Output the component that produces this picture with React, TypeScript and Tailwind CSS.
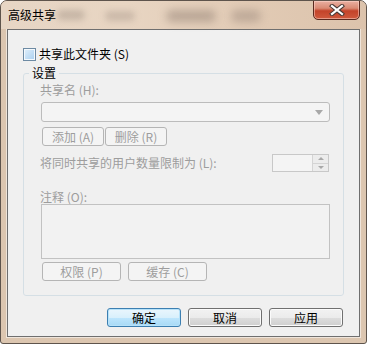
import React from "react";

const font = "font-['Noto_Sans_CJK_SC','Noto_Sans',sans-serif]";

// 비활성 버튼 (Win7 disabled)
function DisabledButton({ label, width }: { label: string; width: string }) {
  return (
    <div
      className={`${width} h-[19px] flex items-center justify-center rounded-[3px] border border-[#b5b5b5] bg-[#f4f4f4] text-[12px] leading-[14px] text-[#9d9d9d]`}
    >
      {label}
    </div>
  );
}

// 하단 버튼
function DialogButton({ label, primary }: { label: string; primary?: boolean }) {
  return (
    <div
      className={
        primary
          ? "w-[74px] h-[19px] flex items-center justify-center rounded-[3px] border border-[#3c7fb1] bg-[linear-gradient(#eaf6fd_0%,#d9f0fc_50%,#bee6fd_51%,#a7d9f5_100%)] shadow-[inset_0_0_0_1px_#b6e2fa] text-[12px] leading-[14px] text-black"
          : "w-[74px] h-[19px] flex items-center justify-center rounded-[3px] border border-[#707070] bg-[linear-gradient(#f2f2f2_0%,#ebebeb_50%,#dddddd_51%,#cfcfcf_100%)] shadow-[inset_0_0_0_1px_#fbfbfb] text-[12px] leading-[14px] text-black"
      }
    >
      {label}
    </div>
  );
}

export default function App() {
  return (
    <div
      className={`${font} w-[367px] h-[344px] relative flex flex-col bg-[#dcc6b0] border border-[#5e544c] rounded-t-[7px] rounded-b-[3px] overflow-hidden`}
    >
      {/* 타이틀 바 */}
      <div className="relative h-[28px] flex items-start bg-[linear-gradient(90deg,#e7d6c5_0%,#e8d5c2_35%,#e1cab4_70%,#dcc3ac_100%)]">
        <span className="pointer-events-none absolute left-[56px] top-[9px] w-[28px] h-[10px] rounded-full bg-[#8a7a70]/35 blur-[3px]" />
        <span className="pointer-events-none absolute left-[104px] top-[10px] w-[30px] h-[10px] rounded-full bg-[#8a7a70]/30 blur-[3px]" />
        <span className="pointer-events-none absolute left-[165px] top-[9px] w-[50px] h-[12px] rounded-full bg-[#7a6a60]/40 blur-[4px]" />
        <span className="pointer-events-none absolute left-[230px] top-[9px] w-[30px] h-[12px] rounded-full bg-[#7a6a60]/35 blur-[4px]" />
        <span className="relative ml-[7px] mt-[7px] text-[12px] leading-[14px] text-black">高级共享</span>
        <div className="relative ml-auto mr-[6px] -mt-px w-[47px] h-[20px] flex items-center justify-center rounded-b-[5px] border border-[#5a2a20] bg-[linear-gradient(#eab0a2_0%,#d98a74_40%,#c3432a_55%,#cf5a3e_100%)] shadow-[inset_0_0_0_1px_rgba(255,220,210,0.5)]">
          <svg width="16" height="12" viewBox="0 0 16 12">
            <path d="M3 2 L13 10 M13 2 L3 10" stroke="#4a3a36" strokeWidth="4.2" strokeLinecap="square" />
            <path d="M3 2 L13 10 M13 2 L3 10" stroke="#ffffff" strokeWidth="2.2" strokeLinecap="square" />
          </svg>
        </div>
      </div>

      {/* 클라이언트 영역 */}
      <div className="mx-[6px] h-[308px] flex flex-col border border-[#6f6f6f] bg-[#f0f0f0] shadow-[0_0_0_1px_rgba(255,255,255,0.55)]">
        <label className="mt-[17px] ml-[15px] flex items-center gap-[3px] text-[12px] leading-[14px] text-black">
          <span className="w-[13px] h-[13px] border border-[#6d8aa3] bg-[linear-gradient(135deg,#e2f0fb_0%,#bfdcf4_60%,#a9d0f0_100%)] shadow-[inset_0_0_0_1px_#f4f9fd]" />
          共享此文件夹 (S)
        </label>

        <fieldset className="mt-[5px] ml-[15px] w-[321px] h-[230px] border border-[#d5dfe5] rounded-[3px]">
          <legend className="ml-[5px] px-[3px] text-[12px] leading-[14px] text-black">设置</legend>
          <div className="pl-[16px] pr-[13px]">
            <div className="mt-[3px] text-[12px] leading-[14px] text-[#9d9d9d]">共享名 (H):</div>
            <div className="mt-[5px] ml-px w-[289px] h-[20px] flex items-center justify-end pr-[6px] rounded-[3px] border border-[#bcbcbc] bg-[#f4f4f4]">
              <svg width="8" height="5" viewBox="0 0 8 5">
                <path d="M0 0 H8 L4 5 Z" fill="#a8a8a8" />
              </svg>
            </div>
            <div className="mt-[5px] ml-[2px] flex gap-[1px]">
              <DisabledButton label="添加 (A)" width="w-[62px]" />
              <DisabledButton label="删除 (R)" width="w-[62px]" />
            </div>
            <div className="mt-[8px] flex items-center">
              <span className="text-[12px] leading-[14px] text-[#9d9d9d]">将同时共享的用户数量限制为 (L):</span>
              <div className="ml-auto mr-[1px] w-[57px] h-[18px] flex border border-[#c8c8c8] bg-[#f4f4f4]">
                <div className="flex-1" />
                <div className="w-[16px] flex flex-col border-l border-[#d4d4d4]">
                  <div className="flex-1 flex items-center justify-center border-b border-[#d4d4d4] bg-[#ececec]">
                    <svg width="6" height="3" viewBox="0 0 6 3">
                      <path d="M0 3 H6 L3 0 Z" fill="#a8a8a8" />
                    </svg>
                  </div>
                  <div className="flex-1 flex items-center justify-center bg-[#ececec]">
                    <svg width="6" height="3" viewBox="0 0 6 3">
                      <path d="M0 0 H6 L3 3 Z" fill="#a8a8a8" />
                    </svg>
                  </div>
                </div>
              </div>
            </div>
            <div className="mt-[18px] text-[12px] leading-[14px] text-[#9d9d9d]">注释 (O):</div>
            <div className="ml-px w-[289px] h-[55px] border border-[#c2c2c2] bg-[#f2f2f2]" />
            <div className="mt-[3px] ml-[2px] flex gap-[7px]">
              <DisabledButton label="权限 (P)" width="w-[79px]" />
              <DisabledButton label="缓存 (C)" width="w-[79px]" />
            </div>
          </div>
        </fieldset>

        <div className="mt-[12px] flex justify-end gap-[7px] pr-[16px]">
          <DialogButton label="确定" primary />
          <DialogButton label="取消" />
          <DialogButton label="应用" />
        </div>
      </div>
    </div>
  );
}
